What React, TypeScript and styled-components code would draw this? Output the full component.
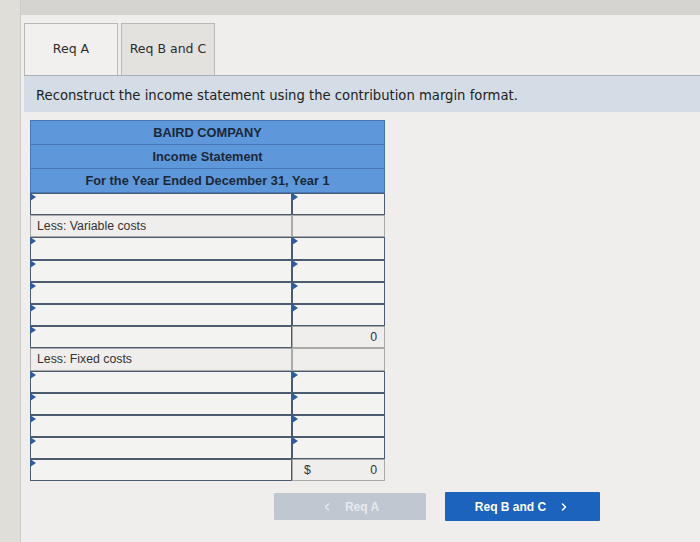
import React from "react";
import styled, { createGlobalStyle } from "styled-components";
import { ChevronLeft, ChevronRight } from "lucide-react";

const GlobalStyle = createGlobalStyle`
  html, body { margin: 0; padding: 0; }
  body {
    background: #eceae7;
    font-family: "Liberation Sans", Arial, sans-serif;
    width: 700px;
    height: 542px;
    overflow: hidden;
  }
`;

const Page = styled.div`
  display: flex;
  height: 542px;
`;

const LeftStrip = styled.div`
  width: 20px;
  flex: none;
  background: #e0ded9;
  border-right: 1px solid #cfcdc9;
`;

const Content = styled.div`
  flex: 1;
  display: flex;
  flex-direction: column;
  background: #efeeec;
`;

const TopBand = styled.div`
  height: 15px;
  background: #d6d4d0;
`;

const Body = styled.div`
  padding-left: 3px;
  display: flex;
  flex-direction: column;
`;

const Tabs = styled.div`
  display: flex;
  gap: 3px;
  margin-top: 8px;
  height: 52px;
`;

const Tab = styled.div<{ $active?: boolean }>`
  width: 94px;
  box-sizing: border-box;
  border: 1px solid #b9b8b5;
  border-bottom: none;
  background: ${(p) => (p.$active ? "#f1f0ee" : "#e3e2df")};
  display: flex;
  align-items: center;
  justify-content: center;
  font-family: "DejaVu Sans", Verdana, sans-serif;
  font-size: 12.5px;
  color: #2c2c2c;
  padding-bottom: 2px;
`;

const Instruction = styled.div`
  height: 37px;
  box-sizing: border-box;
  background: #d4dde5;
  border-top: 1px solid #a9b0b7;
  display: flex;
  align-items: center;
  padding-left: 12px;
  padding-top: 2px;
  font-family: "DejaVu Sans", Verdana, sans-serif;
  font-size: 13.2px;
  color: #222;
`;

const Table = styled.div`
  margin-top: 8px;
  margin-left: 6px;
  width: 355px;
  display: grid;
  grid-template-columns: 262px 93px;
`;

const HeaderRow = styled.div<{ $h: number }>`
  grid-column: 1 / span 2;
  height: ${(p) => p.$h}px;
  box-sizing: border-box;
  background: #5e98db;
  border: 1px solid #4778b5;
  border-top: none;
  &:first-child { border-top: 1px solid #4778b5; }
  display: flex;
  align-items: center;
  justify-content: center;
  font-weight: bold;
  font-size: 12.8px;
  color: #1c2736;
`;

const Cell = styled.div<{ $input?: boolean; $right?: boolean }>`
  position: relative;
  height: 22.2px;
  box-sizing: border-box;
  background: ${(p) => (p.$input ? "#f3f3f1" : "#efeeec")};
  border: ${(p) => (p.$input ? "1.5px solid #4b5b70" : "1px solid #a9a9a7")};
  display: flex;
  align-items: center;
  justify-content: ${(p) => (p.$right ? "flex-end" : "flex-start")};
  padding: 0 7px 0 6px;
  font-size: 12.3px;
  color: #333;
`;

const Marker = styled.span`
  position: absolute;
  left: -1px;
  top: -1px;
  width: 0;
  height: 0;
  border-top: 4px solid transparent;
  border-bottom: 4px solid transparent;
  border-left: 6px solid #2f5c9c;
`;

const Dollar = styled.span`
  flex: 1;
  padding-left: 5px;
  text-align: left;
`;

const Buttons = styled.div`
  display: flex;
  align-items: center;
  margin-top: 11px;
  margin-left: 250px;
  gap: 19px;
`;

const NavButton = styled.div<{ $primary?: boolean }>`
  width: ${(p) => (p.$primary ? 155 : 152)}px;
  height: ${(p) => (p.$primary ? 29 : 27)}px;
  box-sizing: border-box;
  background: ${(p) => (p.$primary ? "#1b63bd" : "#bfc8d1")};
  color: ${(p) => (p.$primary ? "#ffffff" : "#e6eaee")};
  border-radius: 1px;
  display: flex;
  align-items: center;
  justify-content: center;
  gap: 12px;
  font-weight: bold;
  font-size: 12px;
`;

type Row =
  | { kind: "input"; right?: "input" | "zero" | "dollar" }
  | { kind: "label"; text: string };

const rows: Row[] = [
  { kind: "input", right: "input" },
  { kind: "label", text: "Less: Variable costs" },
  { kind: "input", right: "input" },
  { kind: "input", right: "input" },
  { kind: "input", right: "input" },
  { kind: "input", right: "input" },
  { kind: "input", right: "zero" },
  { kind: "label", text: "Less: Fixed costs" },
  { kind: "input", right: "input" },
  { kind: "input", right: "input" },
  { kind: "input", right: "input" },
  { kind: "input", right: "input" },
  { kind: "input", right: "dollar" },
];

export default function App() {
  return (
    <>
      <GlobalStyle />
      <Page>
        <LeftStrip />
        <Content>
          <TopBand />
          <Body>
            <Tabs>
              <Tab $active>Req A</Tab>
              <Tab>Req B and C</Tab>
            </Tabs>
            <Instruction>
              Reconstruct the income statement using the contribution margin format.
            </Instruction>
            <Table>
              <HeaderRow $h={25}>BAIRD COMPANY</HeaderRow>
              <HeaderRow $h={24}>Income Statement</HeaderRow>
              <HeaderRow $h={24}>For the Year Ended December 31, Year 1</HeaderRow>
              {rows.map((r, i) =>
                r.kind === "label" ? (
                  <React.Fragment key={i}>
                    <Cell>{r.text}</Cell>
                    <Cell />
                  </React.Fragment>
                ) : (
                  <React.Fragment key={i}>
                    <Cell $input>
                      <Marker />
                    </Cell>
                    {r.right === "input" ? (
                      <Cell $input>
                        <Marker />
                      </Cell>
                    ) : r.right === "zero" ? (
                      <Cell $right>0</Cell>
                    ) : (
                      <Cell $right>
                        <Dollar>$</Dollar>0
                      </Cell>
                    )}
                  </React.Fragment>
                )
              )}
            </Table>
            <Buttons>
              <NavButton>
                <ChevronLeft size={12} strokeWidth={2.5} />
                <span>Req A</span>
              </NavButton>
              <NavButton $primary>
                <span>Req B and C</span>
                <ChevronRight size={12} strokeWidth={3} />
              </NavButton>
            </Buttons>
          </Body>
        </Content>
      </Page>
    </>
  );
}
